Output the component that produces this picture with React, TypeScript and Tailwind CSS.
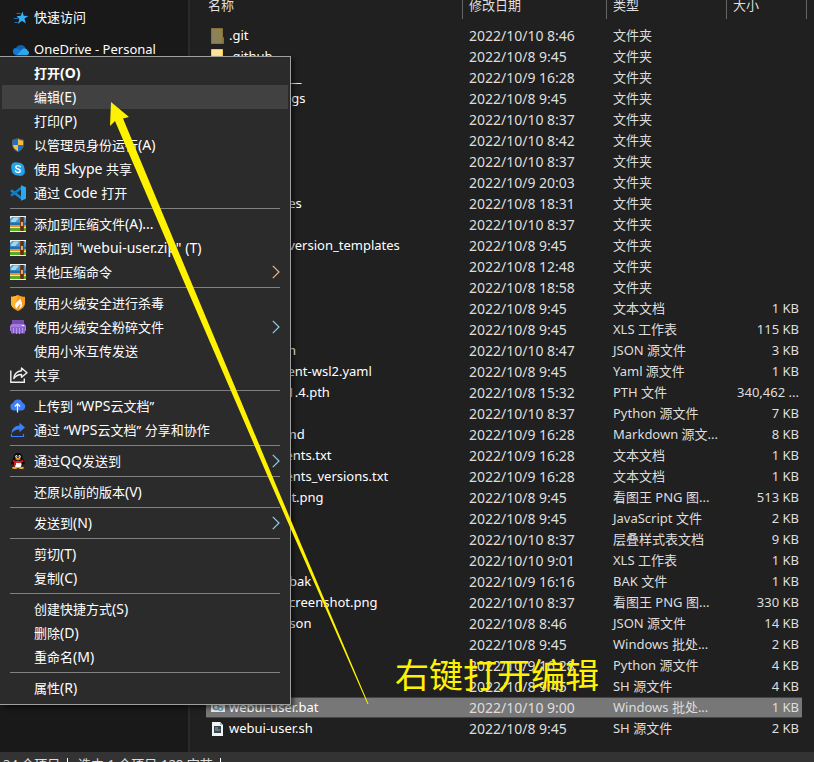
import { ReactNode } from "react";
import clsx from "clsx";

type FileRow = { name: string; date: string; type: string; size?: string };

const files: FileRow[] = [
  { name: ".git", date: "2022/10/10 8:46", type: "文件夹" },
  { name: ".github", date: "2022/10/8 9:45", type: "文件夹" },
  { name: "__pycache__", date: "2022/10/9 16:28", type: "文件夹" },
  { name: "embeddings", date: "2022/10/8 9:45", type: "文件夹" },
  { name: "javascript", date: "2022/10/10 8:37", type: "文件夹" },
  { name: "log", date: "2022/10/10 8:42", type: "文件夹" },
  { name: "models", date: "2022/10/10 8:37", type: "文件夹" },
  { name: "outputs", date: "2022/10/9 20:03", type: "文件夹" },
  { name: "repositories", date: "2022/10/8 18:31", type: "文件夹" },
  { name: "scripts", date: "2022/10/10 8:37", type: "文件夹" },
  { name: "textual_inversion_templates", date: "2022/10/8 9:45", type: "文件夹" },
  { name: "tmp", date: "2022/10/8 12:48", type: "文件夹" },
  { name: "venv", date: "2022/10/8 18:58", type: "文件夹" },
  { name: ".gitignore", date: "2022/10/8 9:45", type: "文本文档", size: "1 KB" },
  { name: "artists.csv", date: "2022/10/8 9:45", type: "XLS 工作表", size: "115 KB" },
  { name: "config.json", date: "2022/10/10 8:47", type: "JSON 源文件", size: "3 KB" },
  { name: "environment-wsl2.yaml", date: "2022/10/8 9:45", type: "Yaml 源文件", size: "1 KB" },
  { name: "GFPGANv1.4.pth", date: "2022/10/8 15:32", type: "PTH 文件", size: "340,462 ..." },
  { name: "launch.py", date: "2022/10/10 8:37", type: "Python 源文件", size: "7 KB" },
  { name: "README.md", date: "2022/10/9 16:28", type: "Markdown 源文...", size: "8 KB" },
  { name: "requirements.txt", date: "2022/10/9 16:28", type: "文本文档", size: "1 KB" },
  { name: "requirements_versions.txt", date: "2022/10/9 16:28", type: "文本文档", size: "1 KB" },
  { name: "screenshot.png", date: "2022/10/8 9:45", type: "看图王 PNG 图...", size: "513 KB" },
  { name: "script.js", date: "2022/10/8 9:45", type: "JavaScript 文件", size: "2 KB" },
  { name: "style.css", date: "2022/10/10 8:37", type: "层叠样式表文档", size: "9 KB" },
  { name: "styles.csv", date: "2022/10/10 9:01", type: "XLS 工作表", size: "1 KB" },
  { name: "styles.csv.bak", date: "2022/10/9 16:16", type: "BAK 文件", size: "1 KB" },
  { name: "txt2img_Screenshot.png", date: "2022/10/10 8:37", type: "看图王 PNG 图...", size: "330 KB" },
  { name: "ui-config.json", date: "2022/10/8 8:46", type: "JSON 源文件", size: "14 KB" },
  { name: "webui.bat", date: "2022/10/8 9:45", type: "Windows 批处...", size: "2 KB" },
  { name: "webui.py", date: "2022/10/9 16:28", type: "Python 源文件", size: "4 KB" },
  { name: "webui.sh", date: "2022/10/8 9:45", type: "SH 源文件", size: "4 KB" },
  { name: "webui-user.bat", date: "2022/10/10 9:00", type: "Windows 批处...", size: "1 KB" },
  { name: "webui-user.sh", date: "2022/10/8 9:45", type: "SH 源文件", size: "2 KB" },
];

const SELECTED = "webui-user.bat";

// Latin runs are set one pixel larger than the Chinese around them
function Mixed({ text }: { text: string }) {
  return (
    <>
      {text.split(/([\x20-\x7e]+)/).map((run, i) =>
        i % 2 ? (
          <span key={i} className="text-[14px]">{run}</span>
        ) : (
          run
        )
      )}
    </>
  );
}

/* Icons */

function Shield() {
  return (
    <svg viewBox="0 0 16 16" className="h-4 w-4">
      <path d="M8 1 14 3v4c0 4-2.500 6.500-6 8.200C4.500 13.500 2 11 2 7V3z" fill="#5a6068" />
      <path d="M8 2v6H3V3.700C5 3.500 6.500 3 8 2z" fill="#1673d2" />
      <path d="M8 2v6h5V3.700C11 3.500 9.500 3 8 2z" fill="#fbbf37" />
      <path d="M8 14.200V8H3c.3 2.900 2.300 4.900 5 6.200z" fill="#fbbf37" />
      <path d="M8 14.200V8h5c-.3 2.900-2.300 4.900-5 6.200z" fill="#1673d2" />
    </svg>
  );
}

function Skype() {
  return (
    <svg viewBox="0 0 16 16" className="h-4 w-4">
      <circle cx="5.500" cy="5.500" r="4.300" fill="#2aa7ee" />
      <circle cx="10.700" cy="10.700" r="4.300" fill="#1b8fe0" />
      <circle cx="8" cy="8" r="6.600" fill="#27a3ec" />
      <path d="M10.300 5.800C9.900 4.900 9 4.600 8 4.600c-1.300 0-2.200.6-2.200 1.600 0 2.300 4.500 1.200 4.500 3.500 0 1.100-1 1.700-2.300 1.700-1.200 0-2.200-.5-2.500-1.500" fill="none" stroke="#fff" strokeWidth="1.400" strokeLinecap="round" />
    </svg>
  );
}

function VsCode() {
  return (
    <svg viewBox="0 0 16 16" className="h-4 w-4">
      <path d="M1 5.200 12.500 14" stroke="#1288d3" strokeWidth="2.600" />
      <path d="M1 10.800 12.500 2" stroke="#0a7cc9" strokeWidth="2.600" />
      <path d="M11 .3 16 2.200v11.600l-5 1.900z" fill="#2ba8f2" />
    </svg>
  );
}

function Archive() {
  return (
    <svg viewBox="0 0 16 16" className="h-4 w-4">
      <path d="M0 0h16v16H0z" fill="#f2f2ee" />
      <path d="M0 3 2 1h13l1 2v4H0z" fill="#4a9bd6" />
      <path d="M1 4.500 4 1.500h5L5.500 6H1z" fill="#a5d8f3" />
      <path d="M0 6.500h16V9H0z" fill="#236fae" />
      <path d="M0 9h16v2H0z" fill="#f0902b" />
      <path d="M0 11h16v1H0z" fill="#fce8a8" />
      <path d="M0 12h16v3H0z" fill="#58ad28" />
      <path d="M10 1h4v14h-4z" fill="#7a3d18" />
      <path d="M11 6h2v4h-2z" fill="#d8b07a" />
      <path d="M12 1v5M12 10v5" stroke="#3c1d0c" strokeWidth=".8" />
    </svg>
  );
}

function FlameShield() {
  return (
    <svg viewBox="0 0 16 16" className="h-4 w-4">
      <path d="M8 0c2.200 1.200 4.500 1.700 7 1.800V8c0 3.500-2.800 6.200-7 8-4.200-1.800-7-4.500-7-8V1.800C3.500 1.700 5.800 1.200 8 0z" fill="#f99a19" />
      <path d="M8 0C5.800 1.200 3.500 1.700 1 1.800V8c0 2.200 1.100 4 3 5.500z" fill="#fdb62e" />
      <path d="M10.500 2.500c.3 2.700-5.500 4.200-5.500 8 0 1.700 1 2.800 2 3.300-.4-2.300 2.800-3.200 3-5.800 1 1.500.2 3.700-1.200 5.700 2.200-.8 3.700-2.700 3.400-4.800-.3-2.200-2.200-3.500-1.700-6.400z" fill="#fff" />
    </svg>
  );
}

function Shredder() {
  return (
    <svg viewBox="0 0 16 16" className="h-4 w-4">
      <path d="M2 1h12v5H2z" fill="#7850b4" />
      <path d="M1.500 5h13L16 7v5H0V7z" fill="#a47be0" />
      <path d="M1 8h14v6.500H1z" fill="#8d63ce" />
      <path d="M3.500 9v5M6.500 9v6M9.500 9v6M12.500 9v5" stroke="#b594ea" strokeWidth="1" />
      <path d="M12 6h2v1h-2z" fill="#fff" />
    </svg>
  );
}

function Share() {
  return (
    <svg viewBox="0 0 18 16" className="h-4 w-[18px] shrink-0" fill="none" stroke="#f0f0f0" strokeWidth="1.400">
      <path d="M.8 3.500v11.700h13.500V11.500" />
      <path d="M11.500 1 17 5.700l-5.500 4.600V7.500C8 7.500 6 8.500 3.800 11.500 4.300 7.500 7 4.200 11.500 3.800z" strokeLinejoin="round" />
    </svg>
  );
}

function CloudUp() {
  return (
    <svg viewBox="0 0 16 16" className="h-4 w-4">
      <path d="M4 12.500a3.800 3.800 0 0 1-1-7.400 5 5 0 0 1 9.500-.3A4 4 0 0 1 12 12.500z" fill="#3d7ff9" />
      <path d="M7.500 14.500V6M4.800 8.500 7.500 5.800l2.700 2.700" fill="none" stroke="#fff" strokeWidth="1.200" />
    </svg>
  );
}

function CloudShare() {
  return (
    <svg viewBox="0 0 16 16" className="h-4 w-4">
      <path d="M9.500.8 15 5.500l-5.500 4.700V7.500C6 7.400 3.500 8.500 1.500 11.500 1.800 7 4.500 3.700 9.500 3.500z" fill="#3d7ff9" />
      <path d="M1.500 12v2.500h12V12" fill="none" stroke="#3d7ff9" strokeWidth="1.200" />
    </svg>
  );
}

function Penguin() {
  return (
    <svg viewBox="0 0 16 16" className="h-4 w-4">
      <path d="M8 0c3 0 4.500 2 4.500 5 1.200 1.800 2.300 4 2.200 6-.5 1-1.400.4-1.900-.4-.3 2.500-2 4-4.800 4s-4.500-1.500-4.800-4c-.5.800-1.400 1.400-1.900.4-.1-2 1-4.200 2.200-6C3.500 2 5 0 8 0z" fill="#070707" />
      <ellipse cx="8" cy="11.300" rx="3.500" ry="3.500" fill="#fff" />
      <ellipse cx="6.400" cy="3.500" rx="1.100" ry="1.500" fill="#fff" />
      <ellipse cx="9.600" cy="3.500" rx="1.100" ry="1.500" fill="#fff" />
      <path d="M6.700 3.200v1M9.300 3.200v1" stroke="#000" strokeWidth=".8" />
      <ellipse cx="8" cy="5.900" rx="2.700" ry=".9" fill="#fba918" />
      <path d="M3 6.800c3 1.800 7 1.800 10 0l.4 1.900c-1.600.9-3.400 1.300-5.400 1.300l-2-.2v2.700H4V9.200l-1.400-.5z" fill="#e8141c" />
      <ellipse cx="4.700" cy="14.900" rx="2.700" ry="1.100" fill="#fba918" />
      <ellipse cx="11.300" cy="14.900" rx="2.700" ry="1.100" fill="#fba918" />
    </svg>
  );
}

function QuickStar() {
  return (
    <svg viewBox="0 0 16 16" className="h-4 w-4">
      <path d="m9.500 1.500 1.200 4.200 4.600.2-3.800 2.700 1.400 4.800-4-2.700-4 3.300 1.500-5L3.500 6.200l4.200-.4z" fill="#35aef5" />
      <path d="M3.500 3.500h4M.8 8.500h4.500M1.500 12.500h3" stroke="#1b74b8" strokeWidth="1" />
    </svg>
  );
}

function OneDriveCloud() {
  return (
    <svg viewBox="0 0 16 16" className="h-4 w-4">
      <path d="M3 12a3 3 0 0 1 0-6.200A5.300 5.300 0 0 1 12.500 6L8 12z" fill="#0a64b8" />
      <path d="M3.500 13.200C1.500 13.200 0 11.500 0 9.700c0-2 1.500-3.300 3.500-3.300 2.200 0 4.500 2 7 3.600z" fill="#1479d3" />
      <path d="M3.500 13.200 9 7.500c1-1.300 4.800-1.700 5.500.9 2.300.8 1.900 4.800-1 4.800z" fill="#2ba8ee" />
    </svg>
  );
}

function FileIcon({ name, folder }: { name: string; folder: boolean }) {
  if (folder) {
    const dim = name === ".git";
    return (
      <svg viewBox="0 0 14 16" className="h-4 w-[14px]">
        <path d="M.5.500h11v15H.5z" fill={dim ? "#8d8158" : "#ffe594"} stroke={dim ? "#857333" : "#f4c64c"} />
        <path d="M11.500 9.500h1v6h-1z" fill={dim ? "#8d8158" : "#ffe594"} stroke={dim ? "#857333" : "#f4c64c"} />
      </svg>
    );
  }
  if (name.endsWith(".bat")) {
    return (
      <svg viewBox="0 0 14 16" className="h-4 w-[14px]">
        <path d="M0 2h14v10H0z" fill="#e8eaec" />
        <circle cx="5" cy="7" r="2.500" fill="none" stroke="#7d8b94" strokeWidth="1.500" />
        <circle cx="9.500" cy="8.500" r="2" fill="none" stroke="#6fa5c0" strokeWidth="1.500" />
      </svg>
    );
  }
  return (
    <svg viewBox="0 0 14 16" className="h-4 w-[14px]">
      <path d="M1 1h8l3 3v11H1z" fill="#f3f3f3" />
      <path d="M9 1v3h3z" fill="#b5b5b5" />
      <path d="M3 5h7v7H3z" fill="#36474f" />
      <path d="M4 7h3M4 9h5" stroke="#b9c5ca" strokeWidth=".8" />
    </svg>
  );
}

/* Context menu */

type Item = { label: string; icon?: ReactNode; bold?: boolean; active?: boolean; sub?: string };

const groups: Item[][] = [
  [
    { label: "打开(O)", bold: true },
    { label: "编辑(E)", active: true },
    { label: "打印(P)" },
    { label: "以管理员身份运行(A)", icon: <Shield /> },
    { label: "使用 Skype 共享", icon: <Skype /> },
    { label: "通过 Code 打开", icon: <VsCode /> },
  ],
  [
    { label: "添加到压缩文件(A)...", icon: <Archive /> },
    { label: '添加到 "webui-user.zip" (T)', icon: <Archive /> },
    { label: "其他压缩命令", icon: <Archive />, sub: "#f0b48c" },
  ],
  [
    { label: "使用火绒安全进行杀毒", icon: <FlameShield /> },
    { label: "使用火绒安全粉碎文件", icon: <Shredder />, sub: "#8fd0ee" },
    { label: "使用小米互传发送" },
    { label: "共享", icon: <Share /> },
  ],
  [
    { label: "上传到 “WPS云文档”", icon: <CloudUp /> },
    { label: "通过 “WPS云文档” 分享和协作", icon: <CloudShare /> },
  ],
  [{ label: "通过QQ发送到", icon: <Penguin />, sub: "#8fd0ee" }],
  [{ label: "还原以前的版本(V)" }],
  [{ label: "发送到(N)", sub: "#8fd0ee" }],
  [{ label: "剪切(T)" }, { label: "复制(C)" }],
  [{ label: "创建快捷方式(S)" }, { label: "删除(D)" }, { label: "重命名(M)" }],
  [{ label: "属性(R)" }],
];

function ContextMenu() {
  return (
    <div
      role="menu"
      className="absolute top-14 left-0 w-[291px] border-y border-r border-[#a0a0a0] bg-[#2b2b2b] px-[2px] py-1 text-white shadow-[3px_3px_4px_rgba(0,0,0,0.5)]"
    >
      {groups.map((group, g) => (
        <div key={g} role="group">
          {g > 0 && (
            <div className="px-2 py-[3px]">
              <div className="h-px bg-[#808080]" />
            </div>
          )}
          {group.map((item) => (
            <button
              key={item.label}
              type="button"
              role="menuitem"
              className={clsx(
                "flex h-6 w-full items-center gap-2 px-2 text-left leading-6 whitespace-nowrap",
                item.active && "bg-[#414141]",
                item.bold && "font-bold"
              )}
            >
              <span className="flex w-4 shrink-0">{item.icon}</span>
              <span className="flex-1">
                <Mixed text={item.label} />
              </span>
              {item.sub && (
                <svg viewBox="0 0 8 14" className="h-[14px] w-2" fill="none" stroke={item.sub} strokeWidth="1.200">
                  <path d="m.8.800 6.200 6.200-6.200 6.200" />
                </svg>
              )}
            </button>
          ))}
        </div>
      ))}
    </div>
  );
}

function FileTable() {
  return (
    <table className="w-full table-fixed border-separate border-spacing-0 text-left whitespace-nowrap text-[#dedede]">
      <colgroup>
        <col />
        <col className="w-[144px]" />
        <col className="w-[120px]" />
        <col className="w-[76px]" />
        <col className="w-[5px]" />
      </colgroup>
      <thead>
        <tr className="h-[19px] align-top leading-[10px]">
          <th className="p-0 pl-[2px] font-normal">名称</th>
          <th className="border-l border-[#636363] p-0 pl-[6px] font-normal">修改日期</th>
          <th className="border-l border-[#636363] p-0 pl-[6px] font-normal">类型</th>
          <th colSpan={2} className="border-x border-[#636363] p-0 pl-[6px] font-normal">大小</th>
        </tr>
        <tr className="h-[6px]" aria-hidden="true">
          <td colSpan={5} className="p-0" />
        </tr>
      </thead>
      <tbody>
        {files.map((file) => {
          const cell = clsx(
            "h-[21px] p-0",
            file.name === SELECTED && "bg-[#777777] shadow-[inset_0_1px_#454545,inset_0_-1px_#454545]"
          );
          return (
            <tr key={file.name} className="leading-[21px]">
              <td className={cell}>
                <div className="flex h-[21px] items-center gap-1 pl-[5px] text-white">
                  <FileIcon name={file.name} folder={file.type === "文件夹"} />
                  <span>{file.name}</span>
                </div>
              </td>
              <td className={cell}>
                <div className="h-[21px] pl-[7px] text-[14px]">{file.date}</div>
              </td>
              <td className={cell}>
                <div className="h-[21px] pl-[7px]">{file.type}</div>
              </td>
              <td className={cell}>
                <div className="h-[21px] pr-[3px] text-right">{file.size}</div>
              </td>
              <td className="p-0" />
            </tr>
          );
        })}
      </tbody>
    </table>
  );
}

export default function App() {
  return (
    <div className="relative flex h-screen flex-col overflow-hidden bg-[#202020] font-['Noto_Sans','Noto_Sans_CJK_SC',sans-serif] text-[13px] text-white">
      <div className="flex min-h-0 flex-1">
        {/* Sidebar */}
        <nav className="w-[190px] shrink-0 border-r-2 border-[#2b2b2b] bg-[#191919] pt-[2px] pl-[13px]">
          <a href="#quick" className="flex h-8 items-center gap-[5px]">
            <QuickStar />
            <span>快速访问</span>
          </a>
          <a href="#onedrive" className="flex h-8 items-center gap-[5px]">
            <OneDriveCloud />
            <span>OneDrive - Personal</span>
          </a>
        </nav>

        {/* File list */}
        <main className="min-w-0 flex-1 pr-[7px] pl-4">
          <FileTable />
        </main>
      </div>

      {/* Status bar */}
      <footer className="flex h-[10px] shrink-0 items-start overflow-hidden bg-[#333333] pl-[3px] leading-6 whitespace-nowrap text-[#dedede]">
        <span className="w-16">34 个项目</span>
        <span className="mt-[6px] h-4 w-[11px] border-l border-white" />
        <span className="w-[83px]">选中 1 个项目</span>
        <span className="w-[59px]">128 字节</span>
        <span className="mt-[6px] h-4 border-l border-white" />
      </footer>

      <ContextMenu />

      {/* Annotation */}
      <svg className="pointer-events-none absolute top-0 left-0 h-[762px] w-[814px]" viewBox="0 0 814 762">
        <polygon
          points="111,102 129,117 123,118.500 194.500,290 276,485 368.500,704 367.500,704 271.500,485 187.500,290 115,121 110,126"
          fill="#fff200"
        />
      </svg>
      <p className="absolute top-[655px] left-[395px] text-[34px] leading-10 whitespace-nowrap text-[#fff200]">右键打开编辑</p>
    </div>
  );
}
